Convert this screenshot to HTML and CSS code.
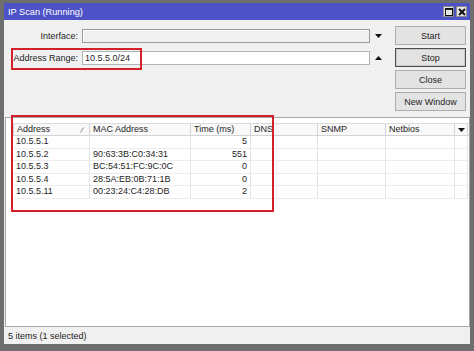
FILE: index.html
```html
<!DOCTYPE html>
<html>
<head>
<meta charset="utf-8">
<link rel="stylesheet" href="styles.css">
</head>
<body>
<div class="window">
  <div class="titlebar">
    <span class="title">IP Scan (Running)</span>
    <div class="tbtns">
      <span class="tb"><svg width="8" height="8" viewBox="0 0 8 8"><rect x="0.5" y="0.5" width="7" height="7" fill="none" stroke="#111" stroke-width="1"/><line x1="0" y1="1.2" x2="8" y2="1.2" stroke="#111" stroke-width="1.4"/></svg></span>
      <span class="tb"><svg width="8" height="8" viewBox="0 0 8 8"><path d="M1 1 L7 7 M7 1 L1 7" stroke="#111" stroke-width="2"/></svg></span>
    </div>
  </div>
  <div class="body">
    <div class="form">
      <div class="lbl">Interface:</div>
      <div class="input disabled"></div>
      <div class="arrowcell"><svg width="7" height="4" viewBox="0 0 7 4"><path d="M0 0 H7 L3.5 4 Z" fill="#111"/></svg></div>
      <div class="btn">Start</div>

      <div class="lbl">Address Range:</div>
      <div class="input">10.5.5.0/24</div>
      <div class="arrowcell"><svg width="7" height="4" viewBox="0 0 7 4"><path d="M0 4 H7 L3.5 0 Z" fill="#111"/></svg></div>
      <div class="btn default">Stop</div>

      <div class="btn col4">Close</div>
      <div class="btn col4">New Window</div>
    </div>

    <div class="list">
      <div class="row head">
        <div class="c c1">Address<svg class="sort" width="4" height="6" viewBox="0 0 4 6"><path d="M0.5 5.5 L3.5 0.5" stroke="#8a8a8a" stroke-width="1"/></svg></div>
        <div class="c c2">MAC Address</div>
        <div class="c c3">Time (ms)</div>
        <div class="c c4">DNS</div>
        <div class="c c5">SNMP</div>
        <div class="c c6">Netbios</div>
        <div class="c c7"><svg width="7" height="4" viewBox="0 0 7 4"><path d="M0 0 H7 L3.5 4 Z" fill="#111"/></svg></div>
      </div>
      <div class="row">
        <div class="c c1">10.5.5.1</div><div class="c c2"></div><div class="c c3 num">5</div><div class="c c4"></div><div class="c c5"></div><div class="c c6"></div><div class="c c7"></div>
      </div>
      <div class="row">
        <div class="c c1">10.5.5.2</div><div class="c c2">90:63:3B:C0:34:31</div><div class="c c3 num">551</div><div class="c c4"></div><div class="c c5"></div><div class="c c6"></div><div class="c c7"></div>
      </div>
      <div class="row">
        <div class="c c1">10.5.5.3</div><div class="c c2">BC:54:51:FC:9C:0C</div><div class="c c3 num">0</div><div class="c c4"></div><div class="c c5"></div><div class="c c6"></div><div class="c c7"></div>
      </div>
      <div class="row">
        <div class="c c1">10.5.5.4</div><div class="c c2">28:5A:EB:0B:71:1B</div><div class="c c3 num">0</div><div class="c c4"></div><div class="c c5"></div><div class="c c6"></div><div class="c c7"></div>
      </div>
      <div class="row">
        <div class="c c1">10.5.5.11</div><div class="c c2">00:23:24:C4:28:DB</div><div class="c c3 num">2</div><div class="c c4"></div><div class="c c5"></div><div class="c c6"></div><div class="c c7"></div>
      </div>
    </div>

    <div class="status">5 items (1 selected)</div>
  </div>

  <div class="annot a1"></div>
  <div class="annot a2"></div>
</div>
</body>
</html>
```

FILE: styles.css
```css
* { box-sizing: border-box; }
html, body { margin: 0; padding: 0; }
body {
  width: 474px;
  height: 351px;
  overflow: hidden;
  font-family: "Liberation Sans", Arial, sans-serif;
  font-size: 9px;
  color: #1e1e1e;
}
.window {
  position: relative;
  width: 474px;
  height: 351px;
  background: #6e6e6e;
  padding: 3px 4px 7px 4px;
  display: flex;
  flex-direction: column;
}
.titlebar {
  height: 17px;
  background: #4d52c6;
  display: flex;
  align-items: center;
  justify-content: space-between;
  padding: 0 3px 0 4px;
}
.title {
  color: #ffffff;
  font-size: 9.2px;
}
.tbtns {
  display: flex;
  gap: 2px;
}
.tb {
  width: 11px;
  height: 11px;
  background: #e6e6e6;
  border: 1px solid #8c8c8c;
  display: flex;
  align-items: center;
  justify-content: center;
}
.body {
  flex: 1;
  background: #f0f0f0;
  display: flex;
  flex-direction: column;
}
.form {
  margin-top: 6px;
  display: grid;
  grid-template-columns: 78px 288px 25px 71px;
  grid-auto-rows: 19px;
  row-gap: 3px;
}
.lbl {
  text-align: right;
  padding-right: 4px;
  align-self: center;
  white-space: nowrap;
}
.input {
  height: 14px;
  align-self: center;
  background: #ffffff;
  border: 1px solid #b4b4b4;
  padding-left: 2px;
  line-height: 12px;
}
.input.disabled {
  background: #f0f0f0;
  border: 1px solid #9a9a9a;
  box-shadow: inset 1px 1px 0 #ffffff;
}
.arrowcell {
  display: flex;
  align-items: center;
  padding-left: 5px;
}
.btn {
  background: #e3e3e3;
  border: 1px solid #adadad;
  display: flex;
  align-items: center;
  justify-content: center;
}
.btn.default {
  border: 1px solid #4e4e4e;
  box-shadow: inset 0 0 0 1px #c8c8c8;
}
.btn.col4 {
  grid-column: 4;
}
.list {
  margin: 6px 0 0 1px;
  height: 210px;
  background: #ffffff;
  border: 1px solid #a6a6a6;
  padding: 5px 0 0 7px;
}
.row {
  display: flex;
  height: 12.5px;
}
.row.head {
  height: 13px;
  background: #f9f9f9;
  border-top: 1px solid #dcdcdc;
  border-bottom: 1px solid #d4d4d4;
}
.c {
  flex: none;
  height: 100%;
  border-right: 1px solid #e4e4e4;
  border-bottom: 1px solid #ececec;
  padding: 0 3px;
  line-height: 11.5px;
  white-space: nowrap;
  overflow: hidden;
}
.head .c {
  border-right: 1px solid #d4d4d4;
  border-bottom: none;
  line-height: 11px;
}
.head .c:first-child { border-left: 1px solid #d4d4d4; }
.c1 { width: 77px; position: relative; }
.c2 { width: 101px; }
.c3 { width: 60px; }
.c4 { width: 67px; }
.c5 { width: 68px; }
.c6 { width: 69px; }
.c7 { width: 13px; display: flex; align-items: center; justify-content: center; padding: 0; }
.num { text-align: right; }
.sort {
  position: absolute;
  right: 5px;
  top: 3px;
}
.status {
  flex: 1;
  padding-left: 4px;
  display: flex;
  align-items: center;
}
.annot {
  position: absolute;
  border: 2px solid #d4202a;
  pointer-events: none;
}
.a1 { left: 11px; top: 48px; width: 131px; height: 22px; }
.a2 { left: 11px; top: 115px; width: 263px; height: 97px; }
```
